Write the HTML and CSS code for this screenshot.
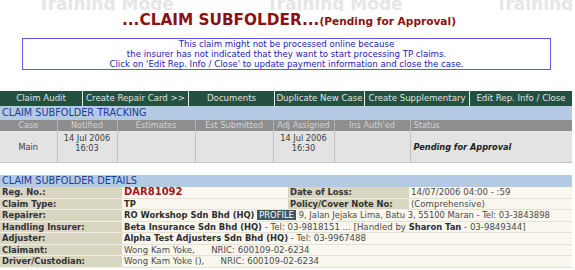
FILE: index.html
```html
<!DOCTYPE html>
<html>
<head>
<meta charset="utf-8">
<link rel="stylesheet" href="styles.css">
</head>
<body>
<div class="page">
  <div class="watermark"><span>Training Mode</span><span>Training Mode</span><span>Training Mode</span></div>
  <h1 class="title"><span class="title-main">...CLAIM SUBFOLDER...</span><span class="title-sub">(Pending for Approval)</span></h1>
  <div class="notice">This claim might not be processed online because<br>the insurer has not indicated that they want to start processing TP claims.<br>Click on 'Edit Rep. Info / Close' to update payment information and close the case.</div>
  <nav class="actions">
    <a class="action">Claim Audit</a>
    <a class="action">Create Repair Card &gt;&gt;</a>
    <a class="action">Documents</a>
    <a class="action">Duplicate New Case</a>
    <a class="action">Create Supplementary</a>
    <a class="action">Edit Rep. Info / Close</a>
  </nav>
  <div class="section-head section-head-tracking">CLAIM SUBFOLDER TRACKING</div>
  <table class="tracking">
    <colgroup><col class="c57"><col class="c60"><col class="c78"><col class="c78"><col class="c61"><col class="c76"><col></colgroup>
    <thead>
      <tr><th>Case</th><th>Notified</th><th>Estimates</th><th>Est Submitted</th><th>Adj Assigned</th><th>Ins Auth'ed</th><th class="left">Status</th></tr>
    </thead>
    <tbody>
      <tr><td>Main</td><td class="date">14 Jul 2006<br>16:03</td><td></td><td></td><td class="date">14 Jul 2006<br>16:30</td><td></td><td class="left status">Pending for Approval</td></tr>
    </tbody>
  </table>
  <div class="section-head section-head-details">CLAIM SUBFOLDER DETAILS</div>
  <table class="details">
    <colgroup><col class="d1"><col class="d2"><col class="d3"><col></colgroup>
    <tbody>
      <tr><th>Reg. No.:</th><td class="reg">DAR81092</td><th>Date of Loss:</th><td>14/07/2006 04:00 - :59</td></tr>
      <tr><th>Claim Type:</th><td><b>TP</b></td><th>Policy/Cover Note No:</th><td>(Comprehensive)</td></tr>
      <tr><th>Repairer:</th><td colspan="3"><b>RO Workshop Sdn Bhd (HQ)</b> <span class="badge">PROFILE</span> <span class="small">9, Jalan Jejaka Lima, Batu 3, 55100 Maran - Tel: 03-3843898</span></td></tr>
      <tr><th>Handling Insurer:</th><td colspan="3"><b>Beta Insurance Sdn Bhd (HQ)</b> - Tel: 03-9818151 ... [Handled by <b>Sharon Tan</b> - 03-9849344]</td></tr>
      <tr><th>Adjuster:</th><td colspan="3"><b>Alpha Test Adjusters Sdn Bhd (HQ)</b> - Tel: 03-9967488</td></tr>
      <tr><th>Claimant:</th><td colspan="3">Wong Kam Yoke,&nbsp;&nbsp;&nbsp;&nbsp;&nbsp; NRIC: 600109-02-6234</td></tr>
      <tr><th>Driver/Custodian:</th><td colspan="3">Wong Kam Yoke (),&nbsp;&nbsp;&nbsp;&nbsp;&nbsp; NRIC: 600109-02-6234</td></tr>
    </tbody>
  </table>
</div>
</body>
</html>
```
FILE: styles.css
```css
html, body {
  margin: 0;
  padding: 0;
  background: #ffffff;
}
body {
  font-family: "DejaVu Sans", Verdana, sans-serif;
  font-size: 8.4px;
  color: #3a3a3a;
}
.page {
  width: 572px;
}
.watermark {
  height: 11px;
  overflow: hidden;
  display: flex;
  align-items: flex-end;
  padding-left: 38px;
  gap: 93px;
  white-space: nowrap;
}
.watermark span {
  font-size: 17px;
  font-weight: bold;
  line-height: 20px;
  color: #e6e6e6;
  margin-bottom: -3px;
}
.title {
  margin: 0;
  height: 27px;
  display: flex;
  justify-content: center;
  align-items: baseline;
  color: #8a1212;
  font-weight: bold;
  padding-left: 6px;
  box-sizing: border-box;
}
.title-main {
  font-size: 15.3px;
}
.title-sub {
  font-size: 10.6px;
}
.notice {
  width: 527px;
  margin: 0 0 0 22px;
  border: 1px solid #5a5aef;
  color: #2323b0;
  text-align: center;
  font-size: 8.6px;
  line-height: 10px;
  height: 30px;
}
.actions {
  margin-top: 21px;
  display: grid;
  grid-template-columns: 83px 106px 86px 90px 105px 102px;
  height: 15px;
  background: #24503f;
}
.action {
  color: #e2e2e2;
  font-size: 8.6px;
  line-height: 15px;
  text-align: center;
  white-space: nowrap;
  border-right: 1px solid #e8ece9;
}
.action:last-child {
  border-right: none;
}
.section-head {
  background: #b3c9e4;
  color: #1c3c98;
  font-size: 9.7px;
  padding-left: 2px;
}
.section-head-tracking {
  height: 14px;
  line-height: 14px;
}
.section-head-details {
  height: 12px;
  line-height: 12px;
}
table {
  border-collapse: collapse;
  table-layout: fixed;
  width: 572px;
}
.c57 { width: 57px; }
.c60 { width: 60px; }
.c78 { width: 78px; }
.c61 { width: 61px; }
.c76 { width: 76px; }
.tracking {
  margin-bottom: 12px;
}
.tracking th {
  background: #8e8e8e;
  color: #d2d2d2;
  font-weight: normal;
  font-size: 8.2px;
  height: 11px;
  line-height: 11px;
  padding: 0;
  border-left: 1px solid #b4b4b4;
  text-align: center;
  white-space: nowrap;
  overflow: hidden;
}
.tracking th:first-child, .tracking td:first-child {
  border-left: none;
}
.tracking td {
  background: #e3e3e3;
  color: #3c3c3c;
  font-size: 8.2px;
  line-height: 10px;
  height: 29px;
  padding: 0;
  text-align: center;
  vertical-align: middle;
  border-left: 1px solid #c2c2c2;
  border-bottom: 1px solid #c6c6c6;
}
.tracking td.date {
  vertical-align: top;
  padding-top: 2px;
}
.tracking .left {
  text-align: left;
  padding-left: 3px;
}
.tracking td.status {
  font-style: italic;
  font-weight: bold;
  color: #1e1e1e;
}
.d1 { width: 122px; }
.d2 { width: 166px; }
.d3 { width: 121px; }
.details th {
  background: #d8d5c1;
  color: #333333;
  font-weight: bold;
  font-size: 8.4px;
  text-align: left;
  padding: 0 0 0 2px;
  height: 10.5px;
  line-height: 10.5px;
  border-bottom: 1px solid #f2f0e6;
  white-space: nowrap;
}
.details td {
  background: #f9f7ee;
  color: #4a4a4a;
  font-size: 8.6px;
  padding: 0 0 0 2px;
  height: 10.5px;
  line-height: 10.5px;
  border-bottom: 1px solid #e4e1d4;
  white-space: nowrap;
  overflow: hidden;
}
.details b {
  color: #2e2e2e;
  font-weight: bold;
  font-size: 8.4px;
}
.details td.reg {
  color: #a01a1a;
  font-weight: bold;
  font-size: 10px;
}
.details .small {
  font-size: 8.4px;
}
.badge {
  background: #3c5960;
  color: #ffffff;
  padding: 0 2px;
  font-size: 8.4px;
}
```
